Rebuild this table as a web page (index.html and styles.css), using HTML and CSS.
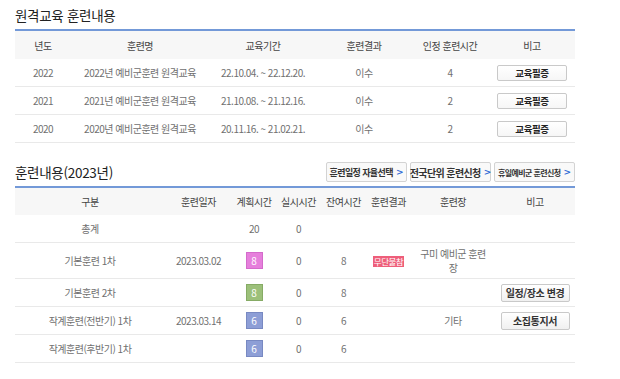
FILE: index.html
```html
<!DOCTYPE html>
<html lang="ko">
<head>
<meta charset="utf-8">
<link rel="stylesheet" href="styles.css">
</head>
<body>
<div class="wrap">
  <h2 class="title">원격교육 훈련내용</h2>
  <table class="tbl t1">
    <colgroup>
      <col class="c56"><col class="c138"><col class="c108"><col class="c94"><col class="c78"><col class="c86">
    </colgroup>
    <thead>
      <tr><th>년도</th><th>훈련명</th><th>교육기간</th><th>훈련결과</th><th>인정 훈련시간</th><th>비고</th></tr>
    </thead>
    <tbody>
      <tr><td>2022</td><td>2022년 예비군훈련 원격교육</td><td>22.10.04. ~ 22.12.20.</td><td>이수</td><td>4</td><td><span class="btn sm">교육필증</span></td></tr>
      <tr><td>2021</td><td>2021년 예비군훈련 원격교육</td><td>21.10.08. ~ 21.12.16.</td><td>이수</td><td>2</td><td><span class="btn sm">교육필증</span></td></tr>
      <tr><td>2020</td><td>2020년 예비군훈련 원격교육</td><td>20.11.16. ~ 21.02.21.</td><td>이수</td><td>2</td><td><span class="btn sm">교육필증</span></td></tr>
    </tbody>
  </table>

  <div class="head2">
    <h2 class="title2">훈련내용(2023년)</h2>
    <div class="links">
      <span class="lnk f1">훈련일정 자율선택<span class="chev">&gt;</span></span>
      <span class="lnk f2">전국단위 훈련신청<span class="chev">&gt;</span></span>
      <span class="lnk f3">휴일예비군 훈련신청<span class="chev">&gt;</span></span>
    </div>
  </div>

  <table class="tbl t2">
    <colgroup>
      <col class="c150"><col class="c67"><col class="c44"><col class="c45"><col class="c45"><col class="c45"><col class="c84"><col class="c80">
    </colgroup>
    <thead>
      <tr><th>구분</th><th>훈련일자</th><th>계획시간</th><th>실시시간</th><th>잔여시간</th><th>훈련결과</th><th>훈련장</th><th>비고</th></tr>
    </thead>
    <tbody>
      <tr><td>총계</td><td></td><td>20</td><td>0</td><td></td><td></td><td></td><td></td></tr>
      <tr class="tall"><td>기본훈련 1차</td><td>2023.03.02</td><td><span class="badge pink">8</span></td><td>0</td><td>8</td><td><span class="absent">무단불참</span></td><td class="place">구미 예비군 훈련장</td><td></td></tr>
      <tr><td>기본훈련 2차</td><td></td><td><span class="badge green">8</span></td><td>0</td><td>8</td><td></td><td></td><td><span class="btn md">일정/장소 변경</span></td></tr>
      <tr><td>작계훈련(전반기) 1차</td><td>2023.03.14</td><td><span class="badge blue">6</span></td><td>0</td><td>6</td><td></td><td>기타</td><td><span class="btn md">소집통지서</span></td></tr>
      <tr><td>작계훈련(후반기) 1차</td><td></td><td><span class="badge blue">6</span></td><td>0</td><td>6</td><td></td><td></td><td></td></tr>
    </tbody>
  </table>
</div>
</body>
</html>
```

FILE: styles.css
```css
* { box-sizing: border-box; }
html, body { margin: 0; padding: 0; background: #fff; }
body {
  font-family: "Noto Sans CJK KR", "Noto Sans", sans-serif;
  color: #666;
}
.wrap { width: 575px; padding: 5px 0 0 15px; }

.title {
  margin: 0 0 4px;
  font-size: 13.5px;
  line-height: 20px;
  font-weight: normal;
  color: #222;
  letter-spacing: -0.3px;
}

.tbl {
  width: 560px;
  border-collapse: separate;
  border-spacing: 0;
  table-layout: fixed;
  border-top: 2px solid #7399d8;
  font-size: 10px;
  letter-spacing: -0.5px;
}
.tbl th {
  background: #f7f7f7;
  color: #444;
  font-weight: normal;
  height: 28px;
  padding: 0;
  text-align: center;
  vertical-align: middle;
}
.t2 th { height: 27px; }
.tbl td {
  height: 28px;
  padding: 0 4px;
  text-align: center;
  vertical-align: middle;
  border-bottom: 1px solid #e9e9e9;
  color: #707070;
  line-height: 13px;
}
.tbl tr.tall td { height: 36px; }
.tbl td.place { padding: 0 9px; line-height: 14px; }

.c56 { width: 56px; } .c138 { width: 138px; } .c108 { width: 108px; }
.c94 { width: 94px; } .c78 { width: 78px; } .c86 { width: 86px; }
.c150 { width: 150px; } .c67 { width: 67px; } .c44 { width: 44px; }
.c45 { width: 45px; } .c84 { width: 84px; } .c80 { width: 80px; }

.btn {
  display: inline-block;
  border: 1px solid #c9c9c9;
  border-radius: 2px;
  background: linear-gradient(#fff, #f6f6f6);
  color: #222;
  font-weight: bold;
  text-align: center;
  letter-spacing: -0.4px;
  vertical-align: middle;
}
.btn.sm { width: 70px; height: 16px; line-height: 14px; font-size: 9.5px; }
.btn.md { width: 69px; height: 18px; line-height: 16px; font-size: 10px; color: #333; background: linear-gradient(#fff, #f0f0f0); }

.head2 {
  margin-top: 19px;
  margin-bottom: 4px;
  display: flex;
  justify-content: space-between;
  align-items: center;
  height: 20px;
  width: 560px;
}
.title2 {
  margin: 0;
  font-size: 13.5px;
  line-height: 20px;
  font-weight: normal;
  color: #222;
  letter-spacing: -0.3px;
}
.links { display: flex; gap: 3px; }
.lnk {
  display: flex;
  align-items: center;
  justify-content: center;
  width: 81px;
  height: 20px;
  border: 1px solid #d3d3d3;
  border-radius: 2px;
  background: #f9f9f9;
  color: #333;
  font-weight: bold;
  letter-spacing: -0.6px;
  white-space: nowrap;
}
.lnk.f1 { font-size: 9px; }
.lnk.f2 { font-size: 10px; }
.lnk.f3 { font-size: 8px; }
.chev {
  color: #2f6bd6;
  font-weight: bold;
  font-family: "DejaVu Sans", sans-serif;
  font-size: 9px;
  margin-left: 3px;
  letter-spacing: 0;
}

.badge {
  display: inline-block;
  width: 17px;
  height: 17px;
  line-height: 15px;
  color: #fff;
  font-size: 10px;
  letter-spacing: 0;
  vertical-align: middle;
  border: 1px solid;
}
.badge.pink { background: #e67fdc; border-color: #d46bcb; }
.badge.green { background: #9cc07a; border-color: #86ab65; }
.badge.blue { background: #8d9ed6; border-color: #7889c2; }

.absent {
  display: inline-block;
  background: #ee5e7a;
  color: #fff;
  font-size: 8.5px;
  line-height: 11px;
  padding: 0 1px;
  letter-spacing: -0.5px;
  vertical-align: middle;
}
```
